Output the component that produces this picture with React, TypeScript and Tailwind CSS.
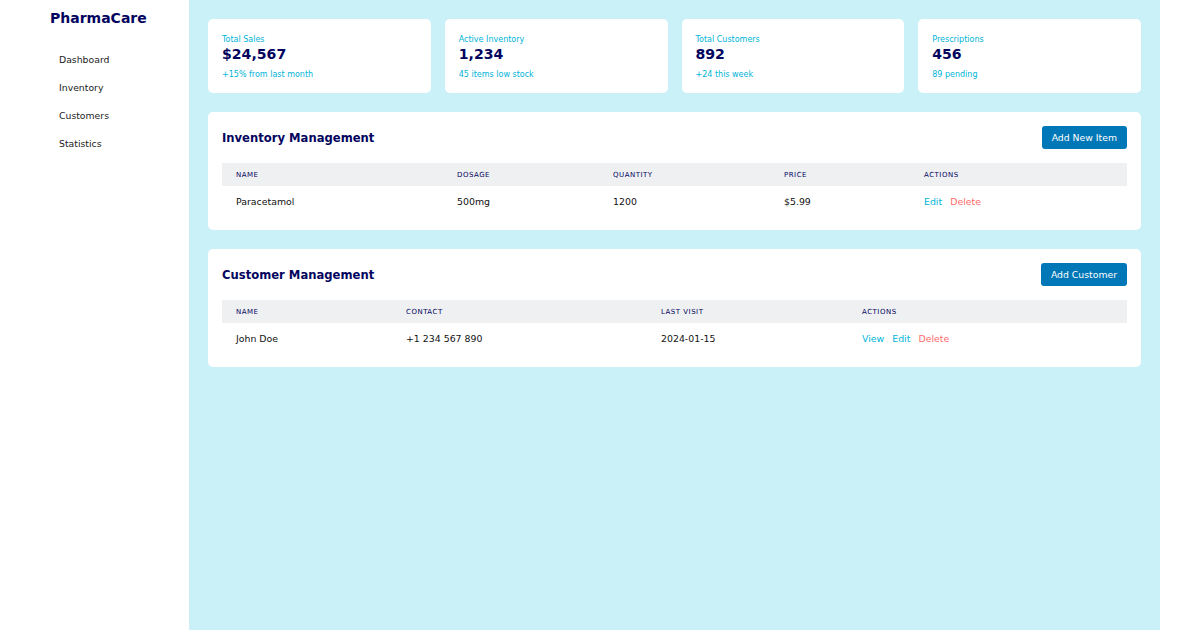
import React from "react";

const navy = "text-[#03045e]";

function Stat({ label, value, sub }: { label: string; value: string; sub: string }) {
  return (
    <div className="bg-white rounded-[5px] h-[74px] px-[14px] pt-[16px]">
      <div className="text-[8px] leading-[10px] text-[#00b4d8]">{label}</div>
      <div className={`text-[14.1px] leading-[19px] font-bold ${navy}`}>{value}</div>
      <div className="text-[8px] leading-[10px] mt-[6px] text-[#00b4d8]">{sub}</div>
    </div>
  );
}

function Th({ children, w }: { children: React.ReactNode; w?: string }) {
  return (
    <th className={`text-left font-normal text-[7px] tracking-[0.5px] uppercase text-[#03045e] pl-[14px] h-[23px] pt-[1px] ${w ?? ""}`}>
      {children}
    </th>
  );
}

function Td({ children }: { children: React.ReactNode }) {
  return <td className="pl-[14px] h-[30px] pt-[2px] text-[9.4px] text-[#111] align-middle">{children}</td>;
}

export default function App() {
  return (
    <div
      className="w-[1160px] min-h-[630px] flex"
      style={{ fontFamily: '"DejaVu Sans", sans-serif' }}
    >
      <aside className="w-[189px] bg-white shrink-0">
        <div className={`pl-[50px] text-[14px] font-bold ${navy} pt-[9px] leading-[19px]`}>PharmaCare</div>
        <nav className="mt-[26px] pl-[59px] flex flex-col gap-[16px]">
          {["Dashboard", "Inventory", "Customers", "Statistics"].map((n) => (
            <div key={n} className="text-[9.3px] leading-[12px] text-[#222]">{n}</div>
          ))}
        </nav>
      </aside>
      <main className="flex-1 bg-[#caf0f8] p-[19px]">
        <div className="grid grid-cols-4 gap-[14px]">
          <Stat label="Total Sales" value="$24,567" sub="+15% from last month" />
          <Stat label="Active Inventory" value="1,234" sub="45 items low stock" />
          <Stat label="Total Customers" value="892" sub="+24 this week" />
          <Stat label="Prescriptions" value="456" sub="89 pending" />
        </div>

        <section className="bg-white rounded-[5px] mt-[19px] px-[14px] pt-[14px] pb-[14px]">
          <div className="flex items-center justify-between h-[23px]">
            <h2 className={`text-[11.6px] font-bold ${navy} pt-[2px]`}>Inventory Management</h2>
            <button className="bg-[#0077b6] text-white text-[9.3px] h-[23px] px-[10px] rounded-[3px]">Add New Item</button>
          </div>
          <table className="w-full mt-[14px] border-collapse">
            <thead>
              <tr className="bg-[#eff0f2]">
                <Th w="w-[221px]">Name</Th>
                <Th w="w-[156px]">Dosage</Th>
                <Th w="w-[171px]">Quantity</Th>
                <Th w="w-[140px]">Price</Th>
                <Th>Actions</Th>
              </tr>
            </thead>
            <tbody>
              <tr>
                <Td>Paracetamol</Td>
                <Td>500mg</Td>
                <Td>1200</Td>
                <Td>$5.99</Td>
                <Td>
                  <span className="text-[#00b4d8]">Edit</span>
                  <span className="text-[#ff6b6b] ml-[8px]">Delete</span>
                </Td>
              </tr>
            </tbody>
          </table>
        </section>

        <section className="bg-white rounded-[5px] mt-[19px] px-[14px] pt-[14px] pb-[14px]">
          <div className="flex items-center justify-between h-[23px]">
            <h2 className={`text-[11.6px] font-bold ${navy} pt-[2px]`}>Customer Management</h2>
            <button className="bg-[#0077b6] text-white text-[9.3px] h-[23px] px-[10px] rounded-[3px]">Add Customer</button>
          </div>
          <table className="w-full mt-[14px] border-collapse">
            <thead>
              <tr className="bg-[#eff0f2]">
                <Th w="w-[170px]">Name</Th>
                <Th w="w-[255px]">Contact</Th>
                <Th w="w-[201px]">Last Visit</Th>
                <Th>Actions</Th>
              </tr>
            </thead>
            <tbody>
              <tr>
                <Td>John Doe</Td>
                <Td>+1 234 567 890</Td>
                <Td>2024-01-15</Td>
                <Td>
                  <span className="text-[#00b4d8]">View</span>
                  <span className="text-[#00b4d8] ml-[8px]">Edit</span>
                  <span className="text-[#ff6b6b] ml-[8px]">Delete</span>
                </Td>
              </tr>
            </tbody>
          </table>
        </section>
      </main>
    </div>
  );
}
